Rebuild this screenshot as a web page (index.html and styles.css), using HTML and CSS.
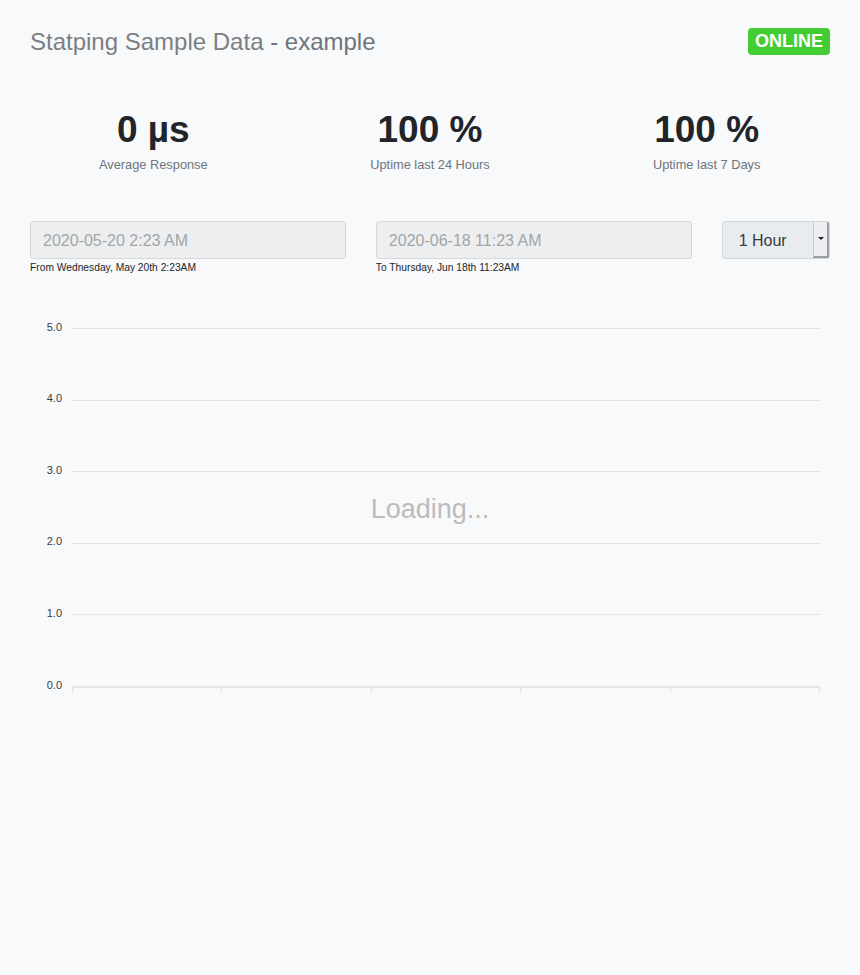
FILE: index.html
```html
<!DOCTYPE html>
<html>
<head>
<meta charset="utf-8">
<link rel="stylesheet" href="styles.css">
</head>
<body>
<div class="container">
  <div class="header">
    <h1 class="title">Statping Sample Data <span class="sub">- example</span></h1>
    <span class="badge">ONLINE</span>
  </div>
  <div class="stats">
    <div class="stat"><div class="num">0 µs</div><div class="lbl">Average Response</div></div>
    <div class="stat"><div class="num">100 %</div><div class="lbl">Uptime last 24 Hours</div></div>
    <div class="stat"><div class="num">100 %</div><div class="lbl">Uptime last 7 Days</div></div>
  </div>
  <div class="controls">
    <div class="col5">
      <div class="input">2020-05-20 2:23 AM</div>
      <small class="hint">From Wednesday, May 20th 2:23AM</small>
    </div>
    <div class="col5">
      <div class="input">2020-06-18 11:23 AM</div>
      <small class="hint">To Thursday, Jun 18th 11:23AM</small>
    </div>
    <div class="col2">
      <div class="select"><span class="sel-text">1 Hour</span><span class="sel-arrow"></span></div>
    </div>
  </div>
  <div class="chart">
    <svg width="800" height="390" viewBox="0 0 800 390">
      <g stroke="#e2e4e6" stroke-width="1">
        <line x1="42" y1="18.5" x2="790" y2="18.5"/>
        <line x1="42" y1="90.5" x2="790" y2="90.5"/>
        <line x1="42" y1="161.5" x2="790" y2="161.5"/>
        <line x1="42" y1="233.5" x2="790" y2="233.5"/>
        <line x1="42" y1="304.5" x2="790" y2="304.5"/>
        <line x1="42" y1="377" x2="790" y2="377" stroke-width="2"/>
        <line x1="42.5" y1="377" x2="42.5" y2="383"/>
        <line x1="191.5" y1="377" x2="191.5" y2="383"/>
        <line x1="341.5" y1="377" x2="341.5" y2="383"/>
        <line x1="490.5" y1="377" x2="490.5" y2="383"/>
        <line x1="640.5" y1="377" x2="640.5" y2="383"/>
        <line x1="789.5" y1="377" x2="789.5" y2="383"/>
      </g>
      <g class="axis" text-anchor="end">
        <text x="32" y="21">5.0</text>
        <text x="32" y="92">4.0</text>
        <text x="32" y="164">3.0</text>
        <text x="32" y="235">2.0</text>
        <text x="32" y="307">1.0</text>
        <text x="32" y="379">0.0</text>
      </g>
      <text class="loading" x="400" y="208" text-anchor="middle">Loading...</text>
    </svg>
  </div>
</div>
</body>
</html>
```
FILE: styles.css
```css
* { box-sizing: border-box; }
html, body { margin: 0; padding: 0; }
body {
  background: #f8f9fa;
  font-family: "Liberation Sans", Arial, sans-serif;
  color: #212529;
  width: 860px;
  height: 975px;
}
.container { padding: 0 30px; }
.header {
  display: flex;
  justify-content: space-between;
  align-items: flex-start;
  padding-top: 28px;
}
.title {
  margin: 0;
  font-size: 24px;
  font-weight: 400;
  color: #7b7f83;
  line-height: 28px;
}
.title .sub { color: #6c757d; }
.badge {
  background: #43cd35;
  color: #fff;
  font-weight: 700;
  font-size: 18px;
  line-height: 27px;
  height: 27px;
  padding: 0 7px;
  border-radius: 4px;
}
.stats {
  display: grid;
  grid-template-columns: repeat(3, 1fr);
  margin: 53px -15px 0;
}
.stat { text-align: center; }
.num {
  font-size: 37px;
  font-weight: 700;
  line-height: 42px;
  color: #212529;
}
.lbl {
  font-size: 12.8px;
  color: #6c757d;
  margin-top: 6px;
  line-height: 16px;
}
.controls {
  display: grid;
  grid-template-columns: 5fr 5fr 2fr;
  margin: 48px -15px 0;
}
.col5, .col2 { padding: 0 15px; }
.input {
  height: 38px;
  border: 1px solid #d6d9dc;
  border-radius: 3px;
  background: #eceef0;
  color: #a3a6a9;
  font-size: 16px;
  line-height: 38px;
  padding: 0 12px;
}
.hint {
  display: block;
  font-size: 10.25px;
  line-height: 14px;
  margin-top: 2px;
  color: #212529;
}
.select {
  display: flex;
  height: 38px;
  border: 1px solid #d3d6d9;
  border-radius: 3px;
  background: #e9ecef;
  overflow: hidden;
}
.sel-text {
  flex: 1;
  font-size: 16px;
  line-height: 38px;
  padding-left: 16px;
  color: #343a40;
}
.sel-arrow {
  width: 16px;
  background: #eceef0;
  border-left: 1px solid #c9ccd0;
  border-right: 2px solid #9a9da1;
  border-bottom: 2px solid #9a9da1;
  position: relative;
}
.sel-arrow::after {
  content: "";
  position: absolute;
  left: 4px;
  top: 15px;
  border-left: 3px solid transparent;
  border-right: 3px solid transparent;
  border-top: 3px solid #222;
}
.chart { margin-top: 35px; }
.chart svg { display: block; }
.axis { font-family: "Liberation Sans", Arial, sans-serif; font-size: 11px; fill: #373d3f; }
.loading { font-family: "Liberation Sans", Arial, sans-serif; font-size: 27px; fill: #bcbcbc; }
```
